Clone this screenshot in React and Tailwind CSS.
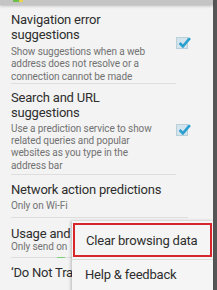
import React from 'react';

const Check = ({ className }) => (
  <div className={'w-[12px] h-[12px] bg-[#d4e4ec] border border-[#b9cfda] relative shrink-0 ' + className}>
    <svg viewBox="0 0 12 12" className="absolute -top-[2px] left-[1px] w-[13px] h-[13px]">
      <path d="M1.5 6.5 L4.5 9.5 L11 2" fill="none" stroke="#2a9fd0" strokeWidth="2.4" />
    </svg>
  </div>
);

const title = 'text-[13px] leading-[15px] tracking-[-0.2px] text-[#2e2e2e]';
const sub = 'text-[10px] leading-[12.3px] tracking-[-0.1px] text-[#727272]';

export default function App() {
  return (
    <div className="w-[217px] h-[290px] overflow-hidden bg-[#f3f3f3] relative flex" style={{ fontFamily: 'Roboto, sans-serif' }}>
      <div className="flex-1 flex flex-col">
        <div className="h-[5px] bg-[#c4c4c4] shadow-[0_1px_3px_rgba(0,0,0,0.25)] relative">
          <div className="absolute left-[13px] top-0 w-[8px] h-[2px] bg-[#6cbf4a]" />
          <div className="absolute left-[19px] top-0 w-[4px] h-[2px] bg-[#e8d44a]" />
        </div>
        <div className="flex flex-col pt-[7px]">
          <div className="flex items-start pl-[11px] pr-[25px]">
            <div className="flex-1 border-b border-[#dedede]">
              <div className={title}>Navigation error<br />suggestions</div>
              <div className={sub + ' mt-[4px] whitespace-nowrap'}>Show suggestions when a web<br />address does not resolve or a<br />connection cannot be made</div>
            </div>
            <Check className="mt-[25px]" />
          </div>
          <div className="flex items-start pl-[11px] pr-[25px] pt-[6px]">
            <div className="flex-1 border-b border-[#dedede] pb-[2px]">
              <div className={title}>Search and URL<br />suggestions</div>
              <div className={sub + ' mt-[3px] whitespace-nowrap'}>Use a prediction service to show<br />related queries and popular<br />websites as you type in the<br />address bar</div>
            </div>
            <Check className="mt-[34px]" />
          </div>
          <div className="pl-[11px] pr-[25px] pt-[7px]">
            <div className="border-b border-[#dedede] pb-[5px]">
              <div className={title + ' whitespace-nowrap'}>Network action predictions</div>
              <div className={sub + ' mt-[3px]'}>Only on Wi-Fi</div>
            </div>
          </div>
          <div className="pl-[11px] pr-[25px] pt-[8px]">
            <div className="border-b border-[#dedede] pb-[3px] relative">
              <div className={title}>Usage and</div>
              <div className={sub}>Only send on</div>
              <div className="absolute left-[46px] -bottom-px w-[8px] h-[1px] bg-[#7bd07b]" />
            </div>
          </div>
          <div className="pl-[11px] pt-[7px]">
            <div className={title + ' whitespace-nowrap'}>‘Do Not Track’</div>
          </div>
        </div>
      </div>
      <div className="w-[4px] bg-[#555]" />
      <div className="absolute left-[72px] top-[221px] w-[141px] h-[80px] bg-[#f5f5f5] shadow-[-1px_0_3px_rgba(0,0,0,0.25)] flex flex-col">
        <div className={'mx-[1px] mt-[2px] h-[34px] border-2 border-[#d6262b] flex items-center pl-[11px] whitespace-nowrap ' + title}>Clear browsing data</div>
        <div className="h-px bg-[#dcdcdc] mt-[2px]" />
        <div className={'h-[28px] flex items-center pl-[13px] whitespace-nowrap ' + title}>Help &amp; feedback</div>
      </div>
    </div>
  );
}
